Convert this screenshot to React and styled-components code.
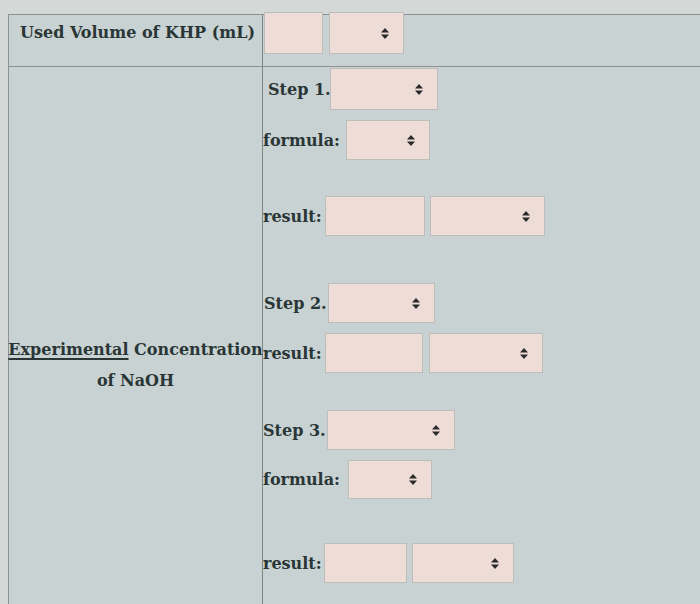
import React from 'react';
import styled, { createGlobalStyle } from 'styled-components';

const GlobalStyle = createGlobalStyle`
  html, body {
    margin: 0;
    padding: 0;
    background: #d4d8d7;
    overflow: hidden;
  }
  body {
    font-family: "DejaVu Serif", Georgia, serif;
  }
`;

const Page = styled.div`
  padding: 14px 0 0 8px;
  height: 604px;
  box-sizing: border-box;
`;

const Table = styled.div`
  display: grid;
  grid-template-columns: 254px 1fr;
  border-top: 1px solid #8c9291;
  border-left: 1px solid #8c9291;
  background: #c8d2d2;
  color: #2a3636;
`;

const LabelCell = styled.div`
  box-sizing: border-box;
  height: ${p => p.height}px;
  border-right: 1px solid #7f8584;
  border-bottom: ${p => (p.last ? 'none' : '1px solid #8c9291')};
  display: flex;
  align-items: ${p => (p.center ? 'center' : 'flex-start')};
  justify-content: ${p => (p.center ? 'center' : 'flex-start')};
  padding: ${p => (p.center ? '0' : '8px 0 0 11px')};
  font-weight: bold;
  font-size: 16px;
  line-height: ${p => (p.center ? '31px' : '20px')};
  text-align: center;
  white-space: nowrap;
`;

const Underlined = styled.span`
  text-decoration: underline;
  text-decoration-thickness: 2px;
  text-underline-offset: 3px;
`;

const FieldCell = styled.div`
  box-sizing: border-box;
  height: ${p => p.height}px;
  border-bottom: ${p => (p.last ? 'none' : '1px solid #8c9291')};
  display: flex;
  flex-direction: column;
  align-items: flex-start;
`;

const Line = styled.div`
  display: flex;
  align-items: center;
  gap: ${p => p.gap || 5}px;
  margin-top: ${p => p.top}px;
  padding-left: ${p => p.indent || 0}px;
`;

const FieldLabel = styled.span`
  width: ${p => p.width}px;
  flex: none;
  font-weight: bold;
  font-size: 16px;
  white-space: nowrap;
`;

const TextBox = styled.div`
  box-sizing: border-box;
  width: ${p => p.w}px;
  height: ${p => p.h || 40}px;
  background: #eedcd6;
  border: 1px solid #bdbebb;
`;

const SelectBox = styled(TextBox)`
  display: flex;
  align-items: center;
  justify-content: flex-end;
  padding-right: 14px;
`;

const Arrows = () => (
  <svg width="8" height="11" viewBox="0 0 8 11">
    <path d="M4 0 L8 4.4 L0 4.4 Z" fill="#2a2a2a" />
    <path d="M0 6.6 L8 6.6 L4 11 Z" fill="#2a2a2a" />
  </svg>
);

const Select = ({ w, h }) => (
  <SelectBox w={w} h={h}>
    <Arrows />
  </SelectBox>
);

export default function App() {
  return (
    <Page>
      <GlobalStyle />
      <Table>
        <LabelCell height={52}>Used Volume of KHP (mL)</LabelCell>
        <FieldCell height={52}>
          <Line top={-3} gap={6} indent={1}>
            <TextBox w={59} h={42} />
            <Select w={75} h={42} />
          </Line>
        </FieldCell>

        <LabelCell height={596} center last>
          <div>
            <Underlined>Experimental</Underlined> Concentration
            <br />
            of NaOH
          </div>
        </LabelCell>
        <FieldCell height={596} last>
          <Line top={1} indent={5}>
            <FieldLabel width={57}>Step 1.</FieldLabel>
            <Select w={108} h={42} />
          </Line>
          <Line top={10}>
            <FieldLabel width={78}>formula:</FieldLabel>
            <Select w={84} />
          </Line>
          <Line top={36}>
            <FieldLabel width={57}>result:</FieldLabel>
            <TextBox w={100} />
            <Select w={115} />
          </Line>
          <Line top={47} indent={1}>
            <FieldLabel width={59}>Step 2.</FieldLabel>
            <Select w={107} />
          </Line>
          <Line top={10} gap={6}>
            <FieldLabel width={56}>result:</FieldLabel>
            <TextBox w={98} />
            <Select w={114} />
          </Line>
          <Line top={37}>
            <FieldLabel width={59}>Step 3.</FieldLabel>
            <Select w={128} />
          </Line>
          <Line top={10}>
            <FieldLabel width={80}>formula:</FieldLabel>
            <Select w={84} h={39} />
          </Line>
          <Line top={44} indent={-1}>
            <FieldLabel width={56}>result:</FieldLabel>
            <TextBox w={83} />
            <Select w={102} />
          </Line>
        </FieldCell>
      </Table>
    </Page>
  );
}
